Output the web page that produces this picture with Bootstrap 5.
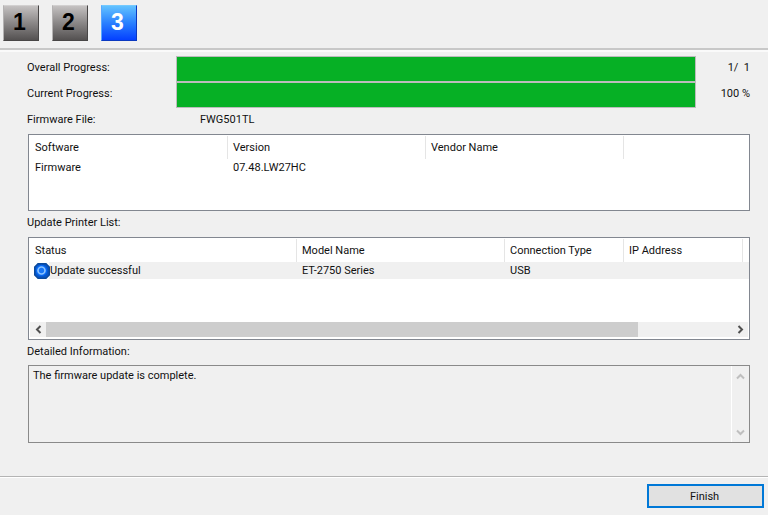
<!DOCTYPE html>
<html lang="en">
<head>
<meta charset="utf-8">
<meta name="viewport" content="width=device-width, initial-scale=1">
<title>Firmware Updater</title>
<link href="https://cdn.jsdelivr.net/npm/bootstrap@5.3.0/dist/css/bootstrap.min.css" rel="stylesheet">
<style>
body { background: #f0f0f0; color: #111; font: 11px/16px Roboto, Tahoma, sans-serif; }
.steps { padding: 5px 3px 7px; gap: 13px; border-bottom: 2px solid #c8c8c8; box-shadow: 0 2px #fafafa; }
.step { width: 36px; height: 36px; padding-right: 3px; font: bold 23px/33px "Liberation Sans", Arial, sans-serif; color: #000;
  background: linear-gradient(#c4c1c1, #8a8787 50%, #545151); border: 1px solid; border-color: #d2d0d0 #484646 #484646 #b4b2b2; }
.step-on { color: #fff; background: linear-gradient(#62c2ff, #2a80ff 50%, #0440ff); border-color: #74caff #0a38c0 #0a38c0 #58a8ff; }
.wizard { padding: 6px 18px 33px 27px; }
.name-col { width: 149px; padding-bottom: 2px; }
.file-col { width: 173px; }
.value-col { width: 54px; padding-bottom: 2px; white-space: pre; }
.meter { height: 26px; border: 1px solid #bcbcbc; border-radius: 0; background: #e6e6e6; }
.meter .progress-bar { background: #06b025; }
.file-row { height: 26px; padding-bottom: 2px; }
.panel { margin-left: 1px; border: 1px solid #828790; background: #fff; }
.software { height: 77px; }
.printers { height: 103px; padding-bottom: 2px; }
.caption-row { height: 26px; padding-top: 4px; }
.caption-info { height: 25px; }
.list { table-layout: fixed; width: 100%; white-space: nowrap; }
.list th { height: 24px; padding: 1px 5px 0; font-weight: 400; background: linear-gradient(#e5e5e5, #e5e5e5) right 0 top 1px / 1px 23px no-repeat; }
.list th:last-child { background: none; }
.list td { height: 17px; padding: 1px 5px 0; line-height: 16px; }
.list th:first-child, .list td:first-child { padding-left: 6px; }
.w-soft { width: 199px; } .w-soft2 { width: 198px; }
.w-status { width: 268px; } .w-model { width: 208px; } .w-conn { width: 119px; }
.picked td { background: #f0f0f0; }
.list .picked td:first-child { padding-left: 5px; background: linear-gradient(#f0f0f0, #f0f0f0) 20px 0 no-repeat; }
.scroll-x { height: 15px; margin: 0 1px; background: #f0f0f0; }
.arrow { border: 0; padding: 0; background: transparent; width: 16px; height: 15px; display: flex; align-items: center; justify-content: center; }
.thumb { width: 86.3%; background: #cdcdcd; }
.details { height: 78px; border-color: #8a8a8a; background: #f0f0f0; }
.details textarea { border: 0; resize: none; background: transparent; padding: 2px 4px; color: inherit; overflow: hidden; outline: 0; }
.scroll-y { width: 18px; border-left: 1px solid #fff; padding: 3px 0 2px; }
.actions { border-top: 1px solid #b4b4b4; box-shadow: inset 0 1px #fff; padding: 7px 4px 7px; }
.finish { width: 117px; height: 24px; padding: 1px 2px 0 0; border: 2px solid #0078d7; border-radius: 0; background: #e1e1e1; color: inherit; font-size: 11px; line-height: 16px; }
</style>
</head>
<body>
<header class="steps d-flex">
  <div class="step text-center">1</div>
  <div class="step text-center">2</div>
  <div class="step step-on text-center" aria-current="step">3</div>
</header>
<main class="wizard">
  <div class="d-flex align-items-center">
    <div class="name-col" id="overall">Overall Progress:</div>
    <div class="progress meter flex-grow-1" role="progressbar" aria-labelledby="overall" aria-valuenow="100" aria-valuemin="0" aria-valuemax="100"><div class="progress-bar w-100"></div></div>
    <div class="value-col text-end">1/  1</div>
  </div>
  <div class="d-flex align-items-center">
    <div class="name-col" id="current">Current Progress:</div>
    <div class="progress meter flex-grow-1" role="progressbar" aria-labelledby="current" aria-valuenow="100" aria-valuemin="0" aria-valuemax="100"><div class="progress-bar w-100"></div></div>
    <div class="value-col text-end">100 %</div>
  </div>
  <div class="file-row d-flex align-items-center">
    <div class="file-col">Firmware File:</div>
    <div>FWG501TL</div>
  </div>
  <div class="panel software">
    <table class="list">
      <colgroup><col class="w-soft"><col class="w-soft2"><col class="w-soft2"><col></colgroup>
      <thead><tr><th>Software</th><th>Version</th><th>Vendor Name</th><th></th></tr></thead>
      <tbody><tr><td>Firmware</td><td>07.48.LW27HC</td><td></td><td></td></tr></tbody>
    </table>
  </div>
  <div class="caption-row" id="printers">Update Printer List:</div>
  <div class="panel printers d-flex flex-column justify-content-between">
    <table class="list" aria-labelledby="printers">
      <colgroup><col class="w-status"><col class="w-model"><col class="w-conn"><col class="w-conn"><col></colgroup>
      <thead><tr><th>Status</th><th>Model Name</th><th>Connection Type</th><th>IP Address</th><th></th></tr></thead>
      <tbody><tr class="picked">
        <td><div class="d-flex align-items-center">
          <svg width="16" height="16" viewBox="0 0 16 16" aria-hidden="true"><path d="M4 .7h8L15.300 4v8L12 15.300H4L.7 12V4z" fill="#0755c8" stroke="#0b4a9c" stroke-width="1.400"/><circle cx="7.500" cy="7.500" r="5.800" fill="#0868f0"/><circle cx="7.500" cy="7.500" r="3.500" fill="#1976f5" stroke="#8cc4ff" stroke-width="1.700"/></svg><span>Update successful</span></div></td>
        <td>ET-2750 Series</td><td>USB</td><td></td><td></td>
      </tr></tbody>
    </table>
    <div class="scroll-x d-flex">
      <button type="button" class="arrow" aria-label="Scroll left"><svg width="7" height="9" viewBox="0 0 7 9"><path d="M5.500 1 2 4.500 5.500 8" fill="none" stroke="#505050" stroke-width="2"/></svg></button>
      <div class="d-flex flex-grow-1"><div class="thumb"></div></div>
      <button type="button" class="arrow" aria-label="Scroll right"><svg width="7" height="9" viewBox="0 0 7 9"><path d="M1.500 1 5 4.500 1.500 8" fill="none" stroke="#505050" stroke-width="2"/></svg></button>
    </div>
  </div>
  <label class="caption-row caption-info d-block" for="info">Detailed Information:</label>
  <div class="panel details d-flex">
    <textarea id="info" class="flex-grow-1" readonly>The firmware update is complete.</textarea>
    <div class="scroll-y d-flex flex-column justify-content-between">
      <button type="button" class="arrow" aria-label="Scroll up"><svg width="9" height="7" viewBox="0 0 9 7"><path d="M1 5.500 4.500 2 8 5.500" fill="none" stroke="#bfbfbf" stroke-width="2"/></svg></button>
      <button type="button" class="arrow" aria-label="Scroll down"><svg width="9" height="7" viewBox="0 0 9 7"><path d="M1 1.500 4.500 5 8 1.500" fill="none" stroke="#bfbfbf" stroke-width="2"/></svg></button>
    </div>
  </div>
</main>
<footer class="actions d-flex justify-content-end">
  <button type="button" class="btn finish">Finish</button>
</footer>
<script src="https://cdn.jsdelivr.net/npm/bootstrap@5.3.0/dist/js/bootstrap.bundle.min.js"></script>
</body>
</html>
